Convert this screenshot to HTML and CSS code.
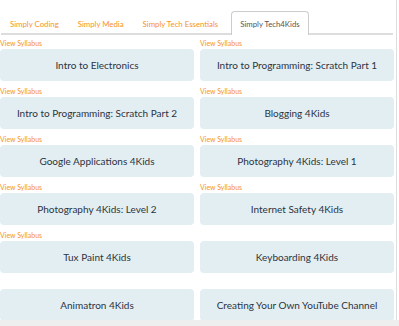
FILE: index.html
```html
<html>
  <head>
    <title>Simply Tech4Kids</title>
    <link rel="stylesheet" href="styles.css">
  </head>
  <body>
    <div id="page">
      <div id="navbar">
        <div class="tab"><span>Simply Coding</span></div>
        <div class="tab"><span>Simply Media</span></div>
        <div class="tab"><span>Simply Tech Essentials</span></div>
        <div class="tab active"><span>Simply Tech4Kids</span></div>
      </div>
      <div class="courses">
        <div class="course"><a class="syllabus">View Syllabus</a><div class="card">Intro to Electronics</div></div>
        <div class="course"><a class="syllabus">View Syllabus</a><div class="card">Intro to Programming: Scratch Part 1</div></div>
        <div class="course"><a class="syllabus">View Syllabus</a><div class="card">Intro to Programming: Scratch Part 2</div></div>
        <div class="course"><a class="syllabus">View Syllabus</a><div class="card">Blogging 4Kids</div></div>
        <div class="course"><a class="syllabus">View Syllabus</a><div class="card">Google Applications 4Kids</div></div>
        <div class="course"><a class="syllabus">View Syllabus</a><div class="card">Photography 4Kids: Level 1</div></div>
        <div class="course"><a class="syllabus">View Syllabus</a><div class="card">Photography 4Kids: Level 2</div></div>
        <div class="course"><a class="syllabus">View Syllabus</a><div class="card">Internet Safety 4Kids</div></div>
        <div class="course"><a class="syllabus">View Syllabus</a><div class="card">Tux Paint 4Kids</div></div>
        <div class="course"><a class="syllabus"></a><div class="card">Keyboarding 4Kids</div></div>
        <div class="course"><a class="syllabus"></a><div class="card">Animatron 4Kids</div></div>
        <div class="course"><a class="syllabus"></a><div class="card">Creating Your Own YouTube Channel</div></div>
      </div>
    </div>
    <div id="scrollbar"></div>
  </body>
</html>
```

FILE: styles.css
```css
body {
  margin: 0;
  font-family: Lato, "Open Sans", sans-serif;
  background: white;
  overflow: hidden;
}
#page {
  width: 396px;
  height: 320px;
  border-right: 1px solid #DDDDDD;
  overflow: hidden;
}
#navbar {
  display: flex;
  width: 392px;
  margin-left: 1px;
  padding-top: 12px;
  border-bottom: 2px solid #DDDDDD;
}
#navbar .tab {
  height: 21px;
  display: flex;
  align-items: center;
  padding: 0 8px 0 9px;
  font-size: 7.8px;
  color: #F7931E;
  border: 1px solid transparent;
  border-bottom: none;
  margin-bottom: -2px;
}
#navbar .tab:first-child {
  padding-left: 8px;
}
#navbar .tab.active {
  color: #555555;
  background: white;
  border-color: #CCCCCC;
  border-radius: 4px 4px 0 0;
  height: 23px;
  margin-top: -1px;
  padding: 0 8px;
  margin-left: 4px;
}
.courses {
  display: grid;
  grid-template-columns: 194px 194px;
  column-gap: 6px;
  row-gap: 6px;
  margin-top: 4px;
}
.syllabus {
  display: block;
  height: 10px;
  line-height: 8px;
  font-size: 7px;
  color: #F7931E;
}
.card {
  height: 32px;
  display: flex;
  align-items: center;
  justify-content: center;
  background: #E3EEF3;
  border-radius: 4px;
  font-size: 10px;
  color: #2B3340;
}
#scrollbar {
  height: 6px;
  background: #EEEEEE;
}
```
